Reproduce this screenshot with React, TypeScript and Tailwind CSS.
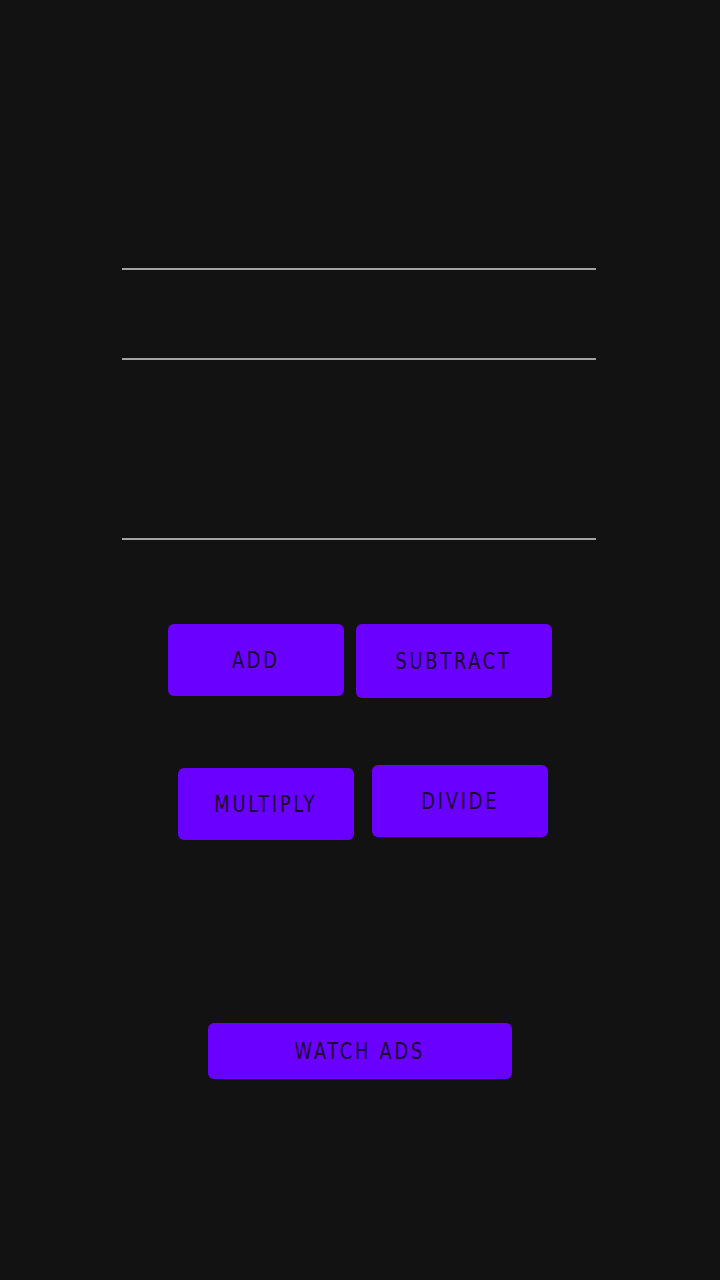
import React from 'react';

const btn =
  "flex items-center justify-center rounded-[6px] bg-[#6a00ff] text-[#1a0a33] leading-none";

const Label: React.FC<{ text: string }> = ({ text }) => (
  <span className="inline-block scale-x-[0.86] text-[23px] tracking-[0.14em] font-['DejaVu_Sans_Condensed','DejaVu_Sans',sans-serif]">
    {text}
  </span>
);

const App: React.FC = () => {
  return (
    <div className="min-h-[1280px] w-[720px] bg-[#121212]">
      {/* input underlines */}
      <div className="flex flex-col pl-[122px] pt-[268px]">
        <div className="h-[2px] w-[474px] bg-[#a4a4a4]" />
        <div className="mt-[88px] h-[2px] w-[474px] bg-[#a4a4a4]" />
        <div className="mt-[178px] h-[2px] w-[474px] bg-[#a4a4a4]" />
      </div>

      {/* operations */}
      <div className="mt-[84px] flex items-start justify-center gap-[12px]">
        <button className={`${btn} h-[72px] w-[176px]`}><Label text="ADD" /></button>
        <button className={`${btn} h-[74px] w-[196px]`}><Label text="SUBTRACT" /></button>
      </div>
      <div className="mt-[67px] flex items-start justify-center gap-[18px] pl-[6px]">
        <button className={`${btn} mt-[3px] h-[72px] w-[176px]`}><Label text="MULTIPLY" /></button>
        <button className={`${btn} h-[72px] w-[176px]`}><Label text="DIVIDE" /></button>
      </div>

      <div className="mt-[183px] flex justify-center">
        <button className={`${btn} h-[56px] w-[304px]`}><Label text="WATCH ADS" /></button>
      </div>
    </div>
  );
};

export default App;
